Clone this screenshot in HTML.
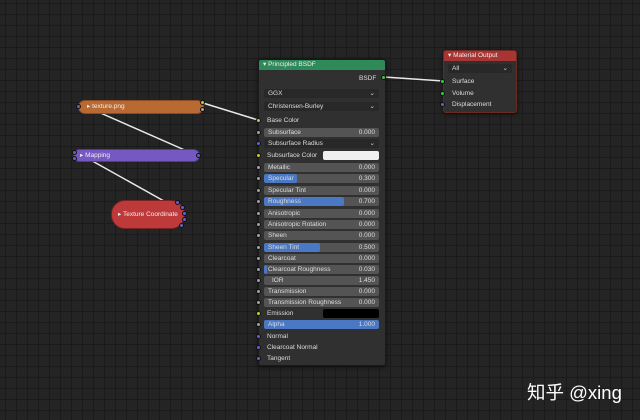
<!DOCTYPE html>
<html><head><meta charset="utf-8"><style>
*{margin:0;padding:0;box-sizing:border-box}
body{width:640px;height:420px;overflow:hidden;position:relative;font-family:"Liberation Sans",sans-serif;font-size:6.5px;color:#ddd;
background-color:#242424;
background-image:linear-gradient(to right,#1b1b1b 1px,transparent 1px),linear-gradient(to bottom,#1b1b1b 1px,transparent 1px);
background-size:11px 11px;background-position:5px 3px}
.a{position:absolute}
.node{position:absolute;background:#303030;border:1px solid #1a1a1a;border-radius:3px;box-shadow:0 1px 4px rgba(0,0,0,.6)}
.f{position:absolute;left:264px;width:115px;height:9px;background:#545454;border-radius:2px;line-height:9px;padding-left:4px;white-space:nowrap;overflow:hidden}
.f b{position:absolute;left:0;top:0;bottom:0;background:#4a78c4;border-radius:2px}
.f span{position:relative}
.f i{position:absolute;right:4px;font-style:normal}
.d{background:#282828}
.l{position:absolute;left:267px;line-height:9px}
.s{position:absolute;width:5px;height:5px;border-radius:50%;border:1px solid #111}
.g{background:#a1a1a1}.y{background:#c7c729}.p{background:#6363c7}.gr{background:#3fc63f}
</style></head><body>
<svg class="a" style="left:0;top:0" width="640" height="420">
<line x1="203" y1="103" x2="258" y2="120" stroke="#e8e8e8" stroke-width="1.5"/>
<line x1="80" y1="104" x2="196" y2="155" stroke="#e8e8e8" stroke-width="1.5"/>
<line x1="78" y1="153" x2="180" y2="210" stroke="#e8e8e8" stroke-width="1.5"/>
<line x1="384" y1="77" x2="443" y2="81" stroke="#e8e8e8" stroke-width="1.5"/>
</svg>
<div class="a" style="left:78px;top:100px;width:126px;height:14px;background:#b96a33;border-radius:7px;border:1px solid #8a4b20;line-height:12px;padding-left:8px;color:#eee">▸ texture.png</div>
<div class="s p" style="left:76px;top:104px"></div>
<div class="s y" style="left:200px;top:100px"></div><div class="s g" style="left:200px;top:107px"></div>
<div class="a" style="left:73px;top:149px;width:127px;height:13px;background:#7558c2;border-radius:7px;border:1px solid #513c8a;line-height:11px;padding-left:6px;color:#eee">▸ Mapping</div>
<div class="s p" style="left:72px;top:150px"></div><div class="s p" style="left:72px;top:156px"></div><div class="s p" style="left:196px;top:153px"></div>
<div class="a" style="left:111px;top:200px;width:74px;height:29px;background:#be3a3a;border-radius:14px;border:1px solid #7a2323;line-height:27px;padding-left:6px;color:#eee">▸ Texture Coordinate</div>
<div class="s p" style="left:175px;top:200px"></div><div class="s p" style="left:180px;top:205px"></div><div class="s p" style="left:182px;top:211px"></div><div class="s p" style="left:182px;top:217px"></div><div class="s p" style="left:179px;top:223px"></div>
<div class="node" style="left:258px;top:59px;width:128px;height:307px"></div>
<div class="a" style="left:259px;top:60px;width:126px;height:10px;background:#2f8a5a;border-radius:2px 2px 0 0;line-height:10px;padding-left:4px;color:#eee">▾ Principled BSDF</div>
<div class="a" style="left:359px;top:74px;line-height:9px">BSDF</div>
<div class="s gr" style="left:381px;top:75px"></div>
<div class="f d" style="top:89px">GGX<i>⌄</i></div>
<div class="f d" style="top:102px">Christensen-Burley<i>⌄</i></div>
<div class="l" style="top:116px">Base Color</div>
<div class="f" style="top:128px"><span>Subsurface</span><i>0.000</i></div>
<div class="f d" style="top:139px">Subsurface Radius<i>⌄</i></div>
<div class="l" style="top:151px">Subsurface Color</div>
<div class="a" style="left:323px;top:151px;width:56px;height:9px;background:#f0f0f0;border-radius:2px"></div>
<div class="f" style="top:163px"><span>Metallic</span><i>0.000</i></div>
<div class="f" style="top:174px"><b style="width:33px"></b><span>Specular</span><i>0.300</i></div>
<div class="f" style="top:186px"><span>Specular Tint</span><i>0.000</i></div>
<div class="f" style="top:197px"><b style="width:80px"></b><span>Roughness</span><i>0.700</i></div>
<div class="f" style="top:209px"><span>Anisotropic</span><i>0.000</i></div>
<div class="f" style="top:220px"><span>Anisotropic Rotation</span><i>0.000</i></div>
<div class="f" style="top:231px"><span>Sheen</span><i>0.000</i></div>
<div class="f" style="top:243px"><b style="width:56px"></b><span>Sheen Tint</span><i>0.500</i></div>
<div class="f" style="top:254px"><span>Clearcoat</span><i>0.000</i></div>
<div class="f" style="top:265px"><b style="width:3px"></b><span>Clearcoat Roughness</span><i>0.030</i></div>
<div class="f" style="top:276px;padding-left:8px"><span>IOR</span><i>1.450</i></div>
<div class="f" style="top:287px"><span>Transmission</span><i>0.000</i></div>
<div class="f" style="top:298px"><span>Transmission Roughness</span><i>0.000</i></div>
<div class="l" style="top:309px">Emission</div>
<div class="a" style="left:323px;top:309px;width:56px;height:9px;background:#000;border-radius:2px"></div>
<div class="f" style="top:320px;background:#4a78c4"><span>Alpha</span><i>1.000</i></div>
<div class="l" style="top:332px">Normal</div>
<div class="l" style="top:343px">Clearcoat Normal</div>
<div class="l" style="top:354px">Tangent</div>
<div class="s y" style="left:256px;top:118px"></div>
<div class="s g" style="left:256px;top:130px"></div>
<div class="s p" style="left:256px;top:141px"></div>
<div class="s y" style="left:256px;top:153px"></div>
<div class="s g" style="left:256px;top:165px"></div><div class="s g" style="left:256px;top:176px"></div><div class="s g" style="left:256px;top:188px"></div><div class="s g" style="left:256px;top:199px"></div><div class="s g" style="left:256px;top:211px"></div><div class="s g" style="left:256px;top:222px"></div><div class="s g" style="left:256px;top:233px"></div><div class="s g" style="left:256px;top:245px"></div><div class="s g" style="left:256px;top:256px"></div><div class="s g" style="left:256px;top:267px"></div><div class="s g" style="left:256px;top:278px"></div><div class="s g" style="left:256px;top:289px"></div><div class="s g" style="left:256px;top:300px"></div>
<div class="s y" style="left:256px;top:311px"></div><div class="s g" style="left:256px;top:322px"></div>
<div class="s p" style="left:256px;top:334px"></div><div class="s p" style="left:256px;top:345px"></div><div class="s p" style="left:256px;top:356px"></div>
<div class="node" style="left:443px;top:50px;width:74px;height:63px;border-color:#6a2a20"></div>
<div class="a" style="left:444px;top:51px;width:72px;height:10px;background:#a83434;border-radius:2px 2px 0 0;line-height:10px;padding-left:4px;color:#eee">▾ Material Output</div>
<div class="a" style="left:448px;top:64px;width:64px;height:9px;background:#282828;border-radius:2px;line-height:9px;padding-left:4px">All<span style="position:absolute;right:4px">⌄</span></div>
<div class="a" style="left:452px;top:77px;line-height:9px">Surface</div>
<div class="a" style="left:452px;top:89px;line-height:9px">Volume</div>
<div class="a" style="left:452px;top:100px;line-height:9px">Displacement</div>
<div class="s gr" style="left:440px;top:79px"></div><div class="s gr" style="left:440px;top:91px"></div><div class="s p" style="left:440px;top:102px"></div>
<div class="a" style="left:527px;top:379px;font-family:'Liberation Sans','Noto Sans CJK SC',sans-serif;font-size:18.5px;color:#fff">知乎 @xing</div>
</body></html>
